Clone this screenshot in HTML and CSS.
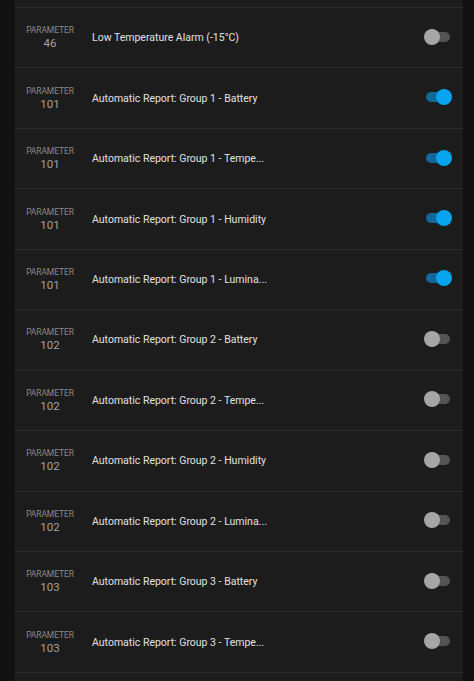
FILE: index.html
```html
<!DOCTYPE html>
<html lang="en">
  <head>
    <meta charset="UTF-8" />
    <meta name="viewport" content="width=device-width, initial-scale=1.0" />
    <title>Parameters</title>
    <link rel="stylesheet" href="styles.css">
  </head>
  <body>
    <div class="card">
      <div class="top"></div>
      <div class="row">
        <div class="param"><span class="label">PARAMETER</span><span class="num">46</span></div>
        <div class="title">Low Temperature Alarm (-15°C)</div>
        <div class="toggle"></div>
      </div>
      <div class="row">
        <div class="param"><span class="label">PARAMETER</span><span class="num">101</span></div>
        <div class="title">Automatic Report: Group 1 - Battery</div>
        <div class="toggle on"></div>
      </div>
      <div class="row">
        <div class="param"><span class="label">PARAMETER</span><span class="num">101</span></div>
        <div class="title">Automatic Report: Group 1 - Tempe...</div>
        <div class="toggle on"></div>
      </div>
      <div class="row">
        <div class="param"><span class="label">PARAMETER</span><span class="num">101</span></div>
        <div class="title">Automatic Report: Group 1 - Humidity</div>
        <div class="toggle on"></div>
      </div>
      <div class="row">
        <div class="param"><span class="label">PARAMETER</span><span class="num">101</span></div>
        <div class="title">Automatic Report: Group 1 - Lumina...</div>
        <div class="toggle on"></div>
      </div>
      <div class="row">
        <div class="param"><span class="label">PARAMETER</span><span class="num">102</span></div>
        <div class="title">Automatic Report: Group 2 - Battery</div>
        <div class="toggle"></div>
      </div>
      <div class="row">
        <div class="param"><span class="label">PARAMETER</span><span class="num">102</span></div>
        <div class="title">Automatic Report: Group 2 - Tempe...</div>
        <div class="toggle"></div>
      </div>
      <div class="row">
        <div class="param"><span class="label">PARAMETER</span><span class="num">102</span></div>
        <div class="title">Automatic Report: Group 2 - Humidity</div>
        <div class="toggle"></div>
      </div>
      <div class="row">
        <div class="param"><span class="label">PARAMETER</span><span class="num">102</span></div>
        <div class="title">Automatic Report: Group 2 - Lumina...</div>
        <div class="toggle"></div>
      </div>
      <div class="row">
        <div class="param"><span class="label">PARAMETER</span><span class="num">103</span></div>
        <div class="title">Automatic Report: Group 3 - Battery</div>
        <div class="toggle"></div>
      </div>
      <div class="row">
        <div class="param"><span class="label">PARAMETER</span><span class="num">103</span></div>
        <div class="title">Automatic Report: Group 3 - Tempe...</div>
        <div class="toggle"></div>
      </div>
      <div class="row"></div>
    </div>
  </body>
</html>
```

FILE: styles.css
```css
html, body {
  margin: 0;
  padding: 0;
  background: #111111;
  overflow: hidden;
}
body {
  font-family: Roboto, "Liberation Sans", sans-serif;
  padding: 0 11px 0 15px;
}
.card {
  background: #1c1c1c;
  height: 681px;
  overflow: hidden;
}
.top {
  height: 7px;
  border-bottom: 1px solid #2b2b2b;
}
.row {
  display: flex;
  align-items: center;
  height: 59.45px;
  border-bottom: 1px solid #2b2b2b;
}
.param {
  width: 70px;
  display: flex;
  flex-direction: column;
  align-items: center;
  flex-shrink: 0;
}
.label {
  font-size: 8.5px;
  color: #8a8a8a;
  letter-spacing: -0.1px;
  line-height: 11px;
}
.num {
  font-size: 11.5px;
  color: #a0a0a0;
  line-height: 14px;
}
.title {
  flex: 1;
  margin-left: 7px;
  font-size: 10.5px;
  color: #e0e0e0;
}
.toggle {
  position: relative;
  width: 24px;
  height: 10px;
  border-radius: 5px;
  background: #545454;
  margin: 0 13px 2px 0;
  flex-shrink: 0;
}
.toggle::after {
  content: "";
  position: absolute;
  top: -3px;
  left: -2px;
  width: 16px;
  height: 16px;
  border-radius: 50%;
  background: #a6a6a6;
}
.toggle.on {
  background: #11699a;
}
.toggle.on::after {
  left: 10px;
  background: #07a4f0;
}
```
